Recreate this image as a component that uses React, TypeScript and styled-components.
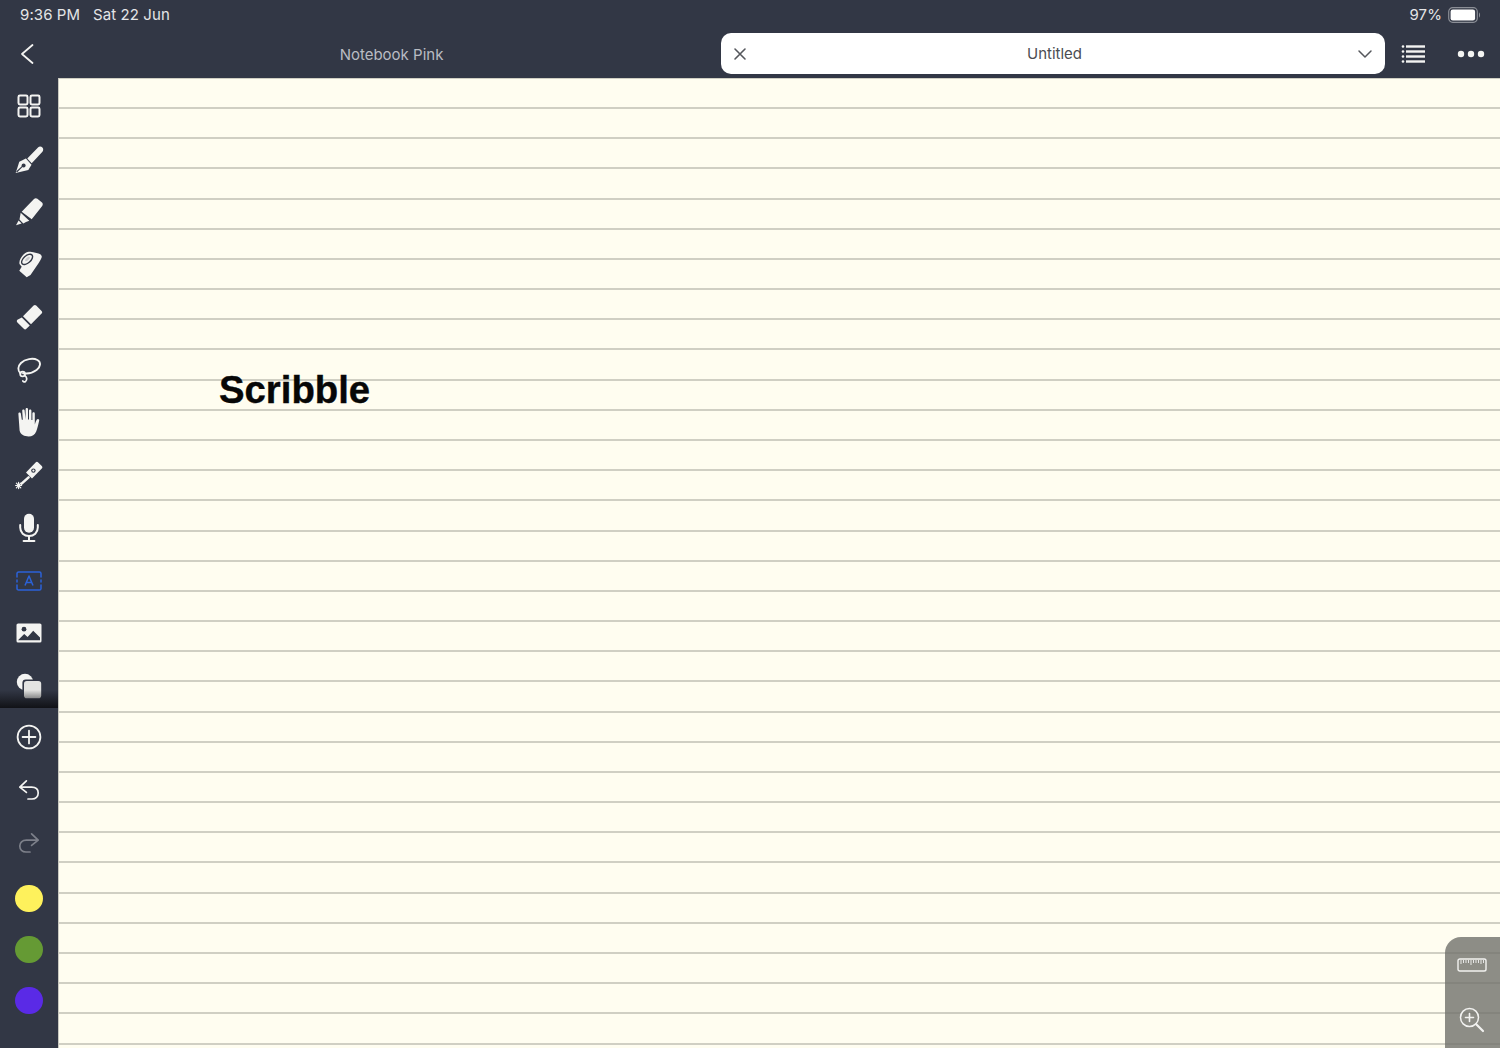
import React from 'react';
import styled, { createGlobalStyle } from 'styled-components';

const barColor = '#323745';
const iconColor = '#f4f4f2';
const ruleColor = '#d0cfc3';

const GlobalStyle = createGlobalStyle`
  html, body {
    margin: 0;
    padding: 0;
    height: 100%;
    overflow: hidden;
    background: ${barColor};
  }
  #root {
    height: 100%;
  }
`;

const Screen = styled.div`
  width: 1500px;
  height: 1048px;
  display: flex;
  flex-direction: column;
  background: ${barColor};
  font-family: 'Inter', 'Liberation Sans', sans-serif;
  overflow: hidden;
`;

const StatusBar = styled.div`
  height: 30px;
  flex: none;
  box-sizing: border-box;
  padding: 0 19px 1px 20px;
  display: flex;
  align-items: center;
  justify-content: space-between;
  color: #e4e5e7;
  font-size: 15px;
  letter-spacing: 0.08px;
`;

const StatusGroup = styled.div<{ $gap: number }>`
  display: flex;
  align-items: center;
  gap: ${(p) => p.$gap}px;
`;

const NavBar = styled.div`
  height: 48px;
  flex: none;
  display: flex;
  align-items: center;
`;

const BackSlot = styled.div`
  width: 58px;
  padding-left: 19px;
  box-sizing: border-box;
  display: flex;
  align-items: center;
  flex: none;
`;

const NotebookName = styled.div`
  width: 663px;
  padding-left: 4px;
  box-sizing: border-box;
  flex: none;
  text-align: center;
  color: #b9bcc3;
  font-size: 15px;
`;

const TitlePill = styled.div`
  width: 664px;
  height: 41px;
  margin-top: -1px;
  flex: none;
  box-sizing: border-box;
  background: #fff;
  border-radius: 10px;
  display: flex;
  align-items: center;
  padding: 0 12px;
  color: #4b4d52;
  font-size: 15px;
`;

const PillTitle = styled.div`
  flex: 1;
  text-align: center;
  padding-left: 5px;
`;

const NavActions = styled.div`
  display: flex;
  align-items: center;
  margin-left: 16px;
  gap: 32px;
`;

const Body = styled.div`
  flex: 1;
  display: flex;
  min-height: 0;
`;

const Rail = styled.div`
  width: 58px;
  flex: none;
  display: flex;
  flex-direction: column;
`;

const ToolSection = styled.div`
  height: 630px;
  flex: none;
  padding-top: 2px;
  box-sizing: border-box;
  position: relative;
  overflow: hidden;
  &::after {
    content: '';
    position: absolute;
    left: 0;
    right: 0;
    bottom: 0;
    height: 18px;
    background: linear-gradient(rgba(15, 16, 20, 0), rgba(15, 16, 20, 0.95));
  }
`;

const Slot = styled.div<{ $height: number }>`
  height: ${(p) => p.$height}px;
  display: flex;
  align-items: center;
  justify-content: center;
  flex: none;
`;

const ActionSection = styled.div`
  padding-top: 2px;
`;

const ColorSection = styled.div`
  padding-top: 4px;
`;

const ColorDot = styled.div<{ $color: string }>`
  width: 27.5px;
  height: 27.5px;
  border-radius: 50%;
  background: ${(p) => p.$color};
`;

const Paper = styled.div`
  flex: 1;
  position: relative;
  overflow: hidden;
  background-color: #fffdf0;
  background-image: repeating-linear-gradient(
    to bottom,
    ${ruleColor} 0,
    ${ruleColor} 0.82px,
    transparent 0.82px,
    transparent 29px,
    ${ruleColor} 29px,
    ${ruleColor} 30.18px
  );
  box-shadow: inset 1px 0 0 #c9c9c0;
`;

const Scribble = styled.div`
  position: absolute;
  left: 161px;
  top: 290px;
  font-family: 'Liberation Sans', Arial, sans-serif;
  font-weight: 700;
  font-size: 38.3px;
  line-height: 44px;
  color: #070707;
  -webkit-text-stroke: 0.4px #070707;
`;

const FloatPanel = styled.div`
  position: absolute;
  right: 0;
  top: 859px;
  width: 55px;
  height: 130px;
  padding-right: 2px;
  box-sizing: border-box;
  border-top-left-radius: 16px;
  background: rgba(112, 112, 108, 0.8);
  display: flex;
  flex-direction: column;
  align-items: center;
`;

const PanelSlot = styled.div`
  height: 55px;
  display: flex;
  align-items: center;
  justify-content: center;
  flex: none;
`;

const Stroke = styled.svg<{ $color?: string }>`
  display: block;
  fill: none;
  stroke: ${(p) => p.$color || iconColor};
  stroke-width: 2;
  stroke-linecap: round;
  stroke-linejoin: round;
`;

const Solid = styled.svg`
  display: block;
  fill: ${iconColor};
`;

const BackIcon = () => (
  <Stroke width="16" height="22" viewBox="0 0 16 22">
    <path d="M13.5 2 L3 11 L13.5 20" strokeWidth={1.8} />
  </Stroke>
);

const CloseIcon = () => (
  <Stroke $color="#55575c" width="14" height="14" viewBox="0 0 14 14">
    <path d="M2 2 L12 12 M12 2 L2 12" strokeWidth={1.6} />
  </Stroke>
);

const ChevronIcon = () => (
  <Stroke $color="#55575c" width="16" height="10" viewBox="0 0 16 10">
    <path d="M2 2 L8 8 L14 2" strokeWidth={1.5} />
  </Stroke>
);

const ListIcon = () => (
  <Solid width="24" height="20" viewBox="0 0 24 20">
    <circle cx="2" cy="2.5" r="1.3" />
    <circle cx="2" cy="7.5" r="1.3" />
    <circle cx="2" cy="12.5" r="1.3" />
    <circle cx="2" cy="17.5" r="1.3" />
    <rect x="5" y="1.3" width="19" height="2.4" />
    <rect x="5" y="6.3" width="19" height="2.4" />
    <rect x="5" y="11.3" width="19" height="2.4" />
    <rect x="5" y="16.3" width="19" height="2.4" />
  </Solid>
);

const MoreIcon = () => (
  <Solid width="28" height="8" viewBox="0 0 28 8">
    <circle cx="4" cy="4" r="3.2" />
    <circle cx="14" cy="4" r="3.2" />
    <circle cx="24" cy="4" r="3.2" />
  </Solid>
);

const BatteryIcon = () => (
  <svg width="33" height="16" viewBox="0 0 33 16" style={{ display: 'block' }}>
    <rect x="0.7" y="0.7" width="28.6" height="14.6" rx="4" fill="none" stroke="#8b8e96" strokeWidth="1.2" />
    <rect x="2.6" y="2.6" width="24.5" height="10.8" rx="2.2" fill="#fff" />
    <path d="M31 5.5 C32.4 6 32.4 10 31 10.5 Z" fill="#8b8e96" />
  </svg>
);

const GridIcon = () => (
  <Stroke width="24" height="24" viewBox="0 0 24 24">
    <rect x="1.5" y="1.5" width="9" height="9" rx="1.4" />
    <rect x="13.5" y="1.5" width="9" height="9" rx="1.4" />
    <rect x="1.5" y="13.5" width="9" height="9" rx="1.4" />
    <rect x="13.5" y="13.5" width="9" height="9" rx="1.4" />
  </Stroke>
);

const PenIcon = () => (
  <svg width="30" height="30" viewBox="0 0 30 30" style={{ display: 'block' }}>
    <path
      d="M24 3.4 C25.4 2.2 27.4 2.4 28.4 3.6 C29.6 5 29.4 6.8 28.2 8 L17.7 19.3 L13.3 14.5 Z"
      fill={iconColor}
    />
    <path d="M11.9 14.6 L17.5 20.8 L14.3 26 L1.7 29 L5.3 17.7 Z" fill={iconColor} />
    <path d="M2.6 28 L8.6 22.2" stroke={barColor} strokeWidth="1.1" />
    <circle cx="9.6" cy="21.4" r="2" fill={barColor} />
  </svg>
);

const HighlighterIcon = () => (
  <Solid width="30" height="30" viewBox="0 0 30 30">
    <path d="M20 2 C21 1 22.4 1 23.4 1.8 L28 5.6 C29 6.6 29 8 28 9.2 L17.7 22.3 L7.7 14.7 Z" />
    <path d="M6.7 15.7 L15.3 23.7 L12 25 L9.3 26.5 L5.5 22.5 Z" />
    <path d="M4.6 23.4 L7.6 26.6 L2 28.2 Z" />
  </Solid>
);

const TapeIcon = () => (
  <svg width="26" height="28" viewBox="-2.5 0 26 28" style={{ display: 'block' }}>
    <path
      d="M6.5 3.3 C9 1.6 12.4 1.4 14.8 2.3 L20 3.6 C22.6 4.4 23.6 6 23.2 7.3 C22.8 9 21.4 11 20.2 13 L12 25 L8.2 27.3 L0.8 20.7 L3.2 16.7 L1 14 C0.2 11 3 5.6 6.5 3.3 Z"
      fill={iconColor}
    />
    <ellipse cx="8.6" cy="9.4" rx="6.6" ry="3.6" transform="rotate(-42 8.6 9.4)" fill="none" stroke={barColor} strokeWidth="1.4" />
    <ellipse cx="9" cy="9" rx="3" ry="1.3" transform="rotate(-42 9 9)" fill="#c9cace" />
  </svg>
);

const EraserIcon = () => (
  <Solid width="28" height="28" viewBox="0 0 28 28">
    <path d="M18.6 2.6 C19.4 1.8 20.4 1.8 21.2 2.6 L26.6 8 C27.4 8.8 27.4 9.8 26.6 10.6 L16 21.2 L8 13.2 Z" />
    <path d="M6.8 14.4 L14.8 22.4 L11.4 25.8 C10.6 26.6 9.6 26.6 8.8 25.8 L2.4 19.4 C1.6 18.6 1.6 17.6 2.4 16.8 Z" />
  </Solid>
);

const LassoIcon = () => (
  <Stroke width="26" height="28" viewBox="0 0 26 28">
    <path d="M4.5 17.5 C1.6 14.5 1.6 10.4 5 7 C9 3 17 1.6 21.4 4 C25.4 6.2 24.6 11 20.6 14 C16.6 17 11.4 18 7 17.2" strokeWidth={1.9} />
    <circle cx="6.6" cy="18" r="2.4" strokeWidth={1.7} />
    <path d="M8.6 19.4 C11 21 11.4 24 9.6 25.4 C8.6 26 7.4 25.8 6.8 25" strokeWidth={1.7} />
  </Stroke>
);

const HandIcon = () => (
  <Solid width="24" height="30" viewBox="0 0 24 30" style={{ marginLeft: -2 }}>
    <path d="M9.6 2.2 C9.6 0.6 12 0.6 12 2.2 L12 12.6 L13 12.6 L13 3.6 C13 2 15.4 2 15.4 3.6 L15.4 13 L16.4 13 L16.4 6.4 C16.4 4.8 18.8 4.8 18.8 6.4 L18.8 17.4 C19.4 15.8 20 14 20.8 12.6 C21.6 11.2 23.6 12 23.2 13.6 C22.4 17 21.6 21 20.2 24.4 C18.8 27.8 16.2 29.4 12.6 29.4 C8.6 29.4 4.4 28 3.6 23.6 L2.4 7 C2.2 5.4 4.6 5 4.8 6.6 L5.8 12.8 L6.8 12.8 L6.2 3.8 C6.1 2.2 8.5 2 8.6 3.6 L9.6 12.6 Z" />
  </Solid>
);

const PipetteIcon = () => (
  <svg width="30" height="30" viewBox="0 0 30 30" style={{ display: 'block' }}>
    <path
      d="M21.6 2.4 C22.4 1.6 23.4 1.6 24.2 2.4 L27.8 6 C28.6 6.8 28.6 7.8 27.8 8.6 L18 18.6 L12 12.4 Z"
      fill={iconColor}
    />
    <circle cx="19.4" cy="10.6" r="2.2" fill={barColor} />
    <circle cx="19.4" cy="10.6" r="1.1" fill={iconColor} />
    <path d="M14.6 17.4 L7.6 23.6" stroke={iconColor} strokeWidth="2.6" strokeLinecap="round" />
    <path
      d="M4.6 22.4 L4.6 28.6 M1.6 25.5 L7.6 25.5 M2.4 23.2 L6.8 27.8 M6.8 23.2 L2.4 27.8"
      stroke={iconColor}
      strokeWidth="1.2"
      strokeLinecap="round"
    />
  </svg>
);

const MicIcon = () => (
  <Stroke width="22" height="30" viewBox="0 0 22 30">
    <rect x="6" y="0.8" width="10" height="19" rx="5" fill={iconColor} stroke="none" />
    <path d="M2.2 12 V14.6 C2.2 19.6 6 23 11 23 C16 23 19.8 19.6 19.8 14.6 V12" strokeWidth={2} />
    <path d="M11 23 V27.4 M5.6 28 H16.4" strokeWidth={2} />
  </Stroke>
);

const TextBoxIcon = () => (
  <svg width="26" height="20" viewBox="0 0 26 20" style={{ display: 'block' }}>
    <path
      d="M1 6 V2.6 C1 1.6 1.6 1 2.6 1 H23.4 C24.4 1 25 1.6 25 2.6 V6 M25 9 V11 M25 14 V17.4 C25 18.4 24.4 19 23.4 19 H2.6 C1.6 19 1 18.4 1 17.4 V14 M1 11 V9"
      fill="none"
      stroke="#2b62d9"
      strokeWidth="1.5"
      strokeLinecap="round"
    />
    <path d="M9 14.5 L13 5 L17 14.5 M10.4 11.4 H15.6" fill="none" stroke="#2b62d9" strokeWidth="1.5" strokeLinejoin="round" />
  </svg>
);

const ImageIcon = () => (
  <svg width="26" height="20" viewBox="0 0 26 20" style={{ display: 'block' }}>
    <rect x="0.5" y="0.5" width="25" height="19" rx="1.6" fill={iconColor} />
    <circle cx="8" cy="6.2" r="2.4" fill={barColor} />
    <path d="M2 17.2 L8.2 11 L11.6 14 L17.2 7.8 L24 14.6 V17.2 Z" fill={barColor} />
  </svg>
);

const ShapesIcon = () => (
  <svg width="26" height="26" viewBox="0 0 26 26" style={{ display: 'block' }}>
    <circle cx="9" cy="9" r="8.2" fill={iconColor} />
    <rect x="6.4" y="6.4" width="19" height="19" rx="3.4" fill={barColor} />
    <rect x="8" y="8" width="17.2" height="17.2" rx="2.8" fill="#e4e4e2" />
  </svg>
);

const PlusCircleIcon = () => (
  <Stroke width="26" height="26" viewBox="0 0 26 26">
    <circle cx="13" cy="13" r="11.4" strokeWidth={1.8} />
    <path d="M13 6.6 V19.4 M6.6 13 H19.4" strokeWidth={1.8} />
  </Stroke>
);

const UndoIcon = () => (
  <Stroke width="22" height="22" viewBox="0 0 22 22">
    <path d="M8.4 1.8 L1.8 8.2 L8.4 13.4 M2 8.2 H13.6 C17.8 8.2 20.2 10.6 20.2 14 C20.2 17.6 17.6 20 14 20 H10" strokeWidth={1.7} />
  </Stroke>
);

const RedoIcon = () => (
  <Stroke $color="#7d808a" width="22" height="22" viewBox="0 0 22 22">
    <path d="M13.6 1.8 L20.2 8.2 L13.6 13.4 M20 8.2 H8.4 C4.2 8.2 1.8 10.6 1.8 14 C1.8 17.6 4.4 20 8 20 H12" strokeWidth={1.7} />
  </Stroke>
);

const RulerIcon = () => (
  <svg width="30" height="14" viewBox="0 0 30 14" style={{ display: 'block' }}>
    <rect x="1" y="1" width="28" height="12" rx="1.8" fill="none" stroke="#f2f2f0" strokeWidth="1.4" />
    <path
      d="M4 2 V6 M6.5 2 V5 M9 2 V5 M11.5 2 V5 M14 2 V7 M16.5 2 V5 M19 2 V5 M21.5 2 V5 M24 2 V6 M26.5 2 V5"
      stroke="#f2f2f0"
      strokeWidth="0.9"
    />
  </svg>
);

const ZoomIcon = () => (
  <svg width="26" height="26" viewBox="0 0 26 26" style={{ display: 'block' }}>
    <g fill="none" stroke="#f2f2f0" strokeLinecap="round">
      <circle cx="10.5" cy="10.5" r="9" strokeWidth="1.5" />
      <path d="M10.5 6.5 V14.5 M6.5 10.5 H14.5" strokeWidth="1.6" />
      <path d="M17.2 17.2 L24 24" strokeWidth="2.2" />
    </g>
  </svg>
);

const tools = [
  GridIcon,
  PenIcon,
  HighlighterIcon,
  TapeIcon,
  EraserIcon,
  LassoIcon,
  HandIcon,
  PipetteIcon,
  MicIcon,
  TextBoxIcon,
  ImageIcon,
  ShapesIcon,
];

const actions = [PlusCircleIcon, UndoIcon, RedoIcon];
const colors = ['#fef15c', '#659a34', '#5a2ae6'];

const App = () => {
  return (
    <Screen>
      <GlobalStyle />
      <StatusBar>
        <StatusGroup $gap={13}>
          <span>9:36 PM</span>
          <span>Sat 22 Jun</span>
        </StatusGroup>
        <StatusGroup $gap={6}>
          <span>97%</span>
          <BatteryIcon />
        </StatusGroup>
      </StatusBar>
      <NavBar>
        <BackSlot>
          <BackIcon />
        </BackSlot>
        <NotebookName>Notebook Pink</NotebookName>
        <TitlePill>
          <CloseIcon />
          <PillTitle>Untitled</PillTitle>
          <ChevronIcon />
        </TitlePill>
        <NavActions>
          <ListIcon />
          <MoreIcon />
        </NavActions>
      </NavBar>
      <Body>
        <Rail>
          <ToolSection>
            {tools.map((Icon, i) => (
              <Slot $height={52.7} key={i}>
                <Icon />
              </Slot>
            ))}
          </ToolSection>
          <ActionSection>
            {actions.map((Icon, i) => (
              <Slot $height={53} key={i}>
                <Icon />
              </Slot>
            ))}
          </ActionSection>
          <ColorSection>
            {colors.map((c) => (
              <Slot $height={51} key={c}>
                <ColorDot $color={c} />
              </Slot>
            ))}
          </ColorSection>
        </Rail>
        <Paper>
          <Scribble>Scribble</Scribble>
          <FloatPanel>
            <PanelSlot>
              <RulerIcon />
            </PanelSlot>
            <PanelSlot>
              <ZoomIcon />
            </PanelSlot>
          </FloatPanel>
        </Paper>
      </Body>
    </Screen>
  );
};

export default App;
